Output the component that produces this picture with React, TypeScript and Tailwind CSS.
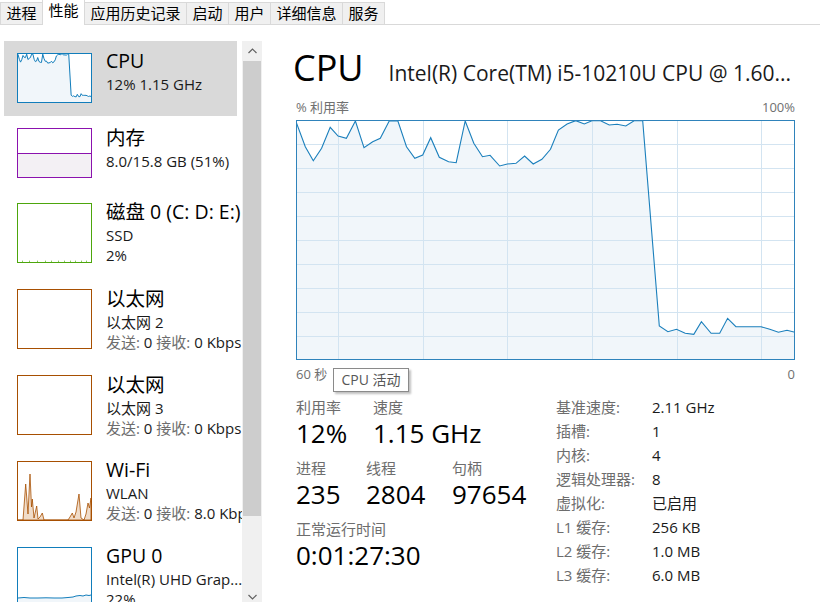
import type { ReactNode } from "react";

const tabs = ["进程", "性能", "应用历史记录", "启动", "用户", "详细信息", "服务"];

// cpu usage samples, chart coords (499 x 240, top = 100%)
const cpu: [number, number][] = [
  [0, 1.7], [9.3, 26.7], [17.3, 40.7], [25.6, 28.3], [34.2, 7.3], [42.1, 16], [50.4, 18.3],
  [59.4, 1], [68, 27.7], [76.7, 21.7], [84.3, 18.3], [93.2, 1], [101.9, 1], [110.5, 26.7],
  [118.8, 38.3], [126.7, 35], [134.7, 17.7], [143.3, 37.3], [152.6, 41.7], [160.2, 42.7],
  [169.2, 1], [177.8, 23.3], [186.5, 36.7], [194.1, 35.3], [203.7, 46], [211.3, 44], [220, 43.3],
  [228.6, 36], [237.2, 44], [245.9, 39.3], [254.5, 29.3], [262.4, 10], [271.1, 4], [279.7, 0.7],
  [288.3, 4], [295.9, 0.7], [304.6, 0.7], [313.2, 5], [321.1, 4.3], [329.8, 6], [338.1, 0.7],
  [346.7, 0.7], [363.3, 206], [371.9, 211.7], [380.5, 209.3], [389.2, 213.3], [397.8, 214.3],
  [405.4, 201.7], [415.1, 213.3], [423.7, 213.3], [431.6, 198.3], [439.9, 206.7], [448.6, 206.7],
  [457.2, 206.7], [465.1, 206.7], [473.8, 209.3], [482.4, 212.3], [491, 210.3], [499, 212.3],
];

const line = cpu.map(([x, y]) => `${x},${y}`).join(" ");
const area = `0,240 ${line} 499,240`;

function CpuThumb() {
  return (
    <svg className="h-full w-full" viewBox="0 0 499 240" preserveAspectRatio="none">
      <polygon points={area} fill="#f1f6fa" />
      <polyline points={line} fill="none" stroke="#117dbb" strokeWidth="1" vectorEffect="non-scaling-stroke" />
    </svg>
  );
}

function MemThumb() {
  return (
    <div className="flex h-full flex-col">
      <div className="h-[24px] bg-white" />
      <div className="flex-1 border-t border-[#8b12ae] bg-[#f3f0f4]" />
    </div>
  );
}

function DiskThumb() {
  const specks = [4, 11, 19, 27, 33, 40, 46, 52, 57, 63, 68];
  return (
    <svg className="h-full w-full" viewBox="0 0 73 58" preserveAspectRatio="none">
      {specks.map((x) => (
        <rect key={x} x={x} y="56.6" width="1" height="1.4" fill="#8cc866" />
      ))}
    </svg>
  );
}

function WifiThumb() {
  const pts =
    "0,58 5,58 7.7,22 10,52 12,12 13.5,45 14.3,37 16,56 18.7,44 20,57 22,55 24.3,51 26,58 50,58 52,55 54.3,51 56,56 58,50 61,32 63,56 66,58 68,52 70,41 71.5,46 73,36 73,58";
  return (
    <svg className="h-full w-full" viewBox="0 0 73 58" preserveAspectRatio="none">
      <polygon points={pts} fill="#f0dcc9" stroke="#a74f01" strokeWidth="0.8" />
    </svg>
  );
}

function GpuThumb() {
  const pts = "0,50 6,49.5 12,50 20,50 28,49.8 36,50 44,50 50,49.5 55,49 58,48 62,47.5 65,48 68,47 71,47.5 73,47";
  return (
    <svg className="h-full w-full" viewBox="0 0 73 58" preserveAspectRatio="none">
      <polygon points={`0,58 ${pts} 73,58`} fill="#f1f6fa" />
      <polyline points={pts} fill="none" stroke="#117dbb" strokeWidth="1" />
    </svg>
  );
}

type Item = {
  title: string;
  lines: ReactNode[];
  row: string;
  box: string;
  text: string;
  border: string;
  thumb: ReactNode;
  selected?: boolean;
};

const traffic = (recv: string) => (
  <>
    <span className="text-[#6d6d6d]">发送:</span> 0 <span className="text-[#6d6d6d]">接收:</span> {recv}
  </>
);

const items: Item[] = [
  { title: "CPU", lines: ["12% 1.15 GHz"], row: "h-[75px]", box: "h-[50px]", text: "mt-[7px]", border: "border-[#117dbb]", thumb: <CpuThumb />, selected: true },
  { title: "内存", lines: ["8.0/15.8 GB (51%)"], row: "h-[75px]", box: "h-[50px]", text: "mt-[9px]", border: "border-[#8b12ae]", thumb: <MemThumb /> },
  { title: "磁盘 0 (C: D: E:)", lines: ["SSD", "2%"], row: "h-[86px]", box: "h-[60px]", text: "mt-[8px]", border: "border-[#4da60c]", thumb: <DiskThumb /> },
  { title: "以太网", lines: ["以太网 2", traffic("0 Kbps")], row: "h-[86px]", box: "h-[60px]", text: "mt-[9px]", border: "border-[#a74f01]", thumb: null },
  { title: "以太网", lines: ["以太网 3", traffic("0 Kbps")], row: "h-[86px]", box: "h-[60px]", text: "mt-[9px]", border: "border-[#a74f01]", thumb: null },
  { title: "Wi-Fi", lines: ["WLAN", traffic("8.0 Kbps")], row: "h-[86px]", box: "h-[60px]", text: "mt-[8px]", border: "border-[#a74f01]", thumb: <WifiThumb /> },
  { title: "GPU 0", lines: ["Intel(R) UHD Grap...", "22%"], row: "h-[86px]", box: "h-[60px]", text: "mt-[8px]", border: "border-[#117dbb]", thumb: <GpuThumb /> },
];

const specs = [
  ["基准速度:", "2.11 GHz"],
  ["插槽:", "1"],
  ["内核:", "4"],
  ["逻辑处理器:", "8"],
  ["虚拟化:", "已启用"],
  ["L1 缓存:", "256 KB"],
  ["L2 缓存:", "1.0 MB"],
  ["L3 缓存:", "6.0 MB"],
];

function Stat({ label, value, w }: { label: string; value: string; w: string }) {
  return (
    <div className={w}>
      <div className="h-[20px] text-[15px] leading-[20px] text-[#6d6d6d]">{label}</div>
      <div className="h-[33px] text-[26px] leading-[33px] text-black">{value}</div>
    </div>
  );
}

const hLines = [24, 48, 72, 96, 120, 144, 168, 192, 216];
const vLines = [42, 127, 211, 296, 381, 465];

export default function App() {
  return (
    <div className="relative h-[602px] w-[820px] overflow-hidden bg-white font-['Open_Sans','Noto_Sans_CJK_SC',sans-serif] text-black">
      <div className="flex h-[25px] items-end border-b border-[#d9d9d9]">
        {tabs.map((t, i) =>
          i === 1 ? (
            <div
              key={t}
              className="relative z-10 -mb-px -ml-px flex h-[26px] items-center border-x border-t border-[#d9d9d9] bg-white px-[5.5px] pb-[4px] text-[15px] leading-none"
            >
              {t}
            </div>
          ) : (
            <div
              key={t}
              className="-ml-px flex h-[22px] items-center border-x border-t border-[#d9d9d9] bg-[#f0f0f0] px-[5.5px] text-[15px] leading-none first:ml-0"
            >
              {t}
            </div>
          ),
        )}
      </div>

      <div className="flex">
        <div className="flex w-[262px] shrink-0">
          <div className="w-[242px] overflow-hidden pt-[16px]">
            {items.map((it, i) => (
              <div
                key={i}
                className={`ml-[4px] flex w-[233px] items-start pl-[13px] ${it.row} ${it.selected ? "bg-[#d9d9d9]" : ""}`}
              >
                <div className={`mt-[12px] w-[75px] shrink-0 border bg-white ${it.box} ${it.border}`}>{it.thumb}</div>
                <div className={`ml-[14px] whitespace-nowrap ${it.text}`}>
                  <div className="text-[19.5px] leading-[26px]">{it.title}</div>
                  {it.lines.map((l, j) => (
                    <div key={j} className="text-[15px] leading-[20px] text-[#1a1a1a]">
                      {l}
                    </div>
                  ))}
                </div>
              </div>
            ))}
          </div>
          <div className="mt-[16px] flex h-[566px] w-[20px] flex-col items-center bg-[#f0f0f0]">
            <div className="flex h-[20px] items-center justify-center">
              <svg width="9" height="6" viewBox="0 0 9 6">
                <polyline points="0.5,5 4.5,1 8.5,5" fill="none" stroke="#606060" strokeWidth="1.2" />
              </svg>
            </div>
            <div className="h-[455px] w-[18px] bg-[#cdcdcd]" />
            <div className="flex-1" />
            <div className="flex h-[20px] items-center justify-center">
              <svg width="9" height="6" viewBox="0 0 9 6">
                <polyline points="0.5,1 4.5,5 8.5,1" fill="none" stroke="#606060" strokeWidth="1.2" />
              </svg>
            </div>
          </div>
        </div>

        <div className="ml-[34px] flex w-[499px] flex-col">
          <div className="mt-[21px] flex h-[44px] items-baseline whitespace-nowrap">
            <span className="-ml-[3px] text-[36px] leading-[44px]">CPU</span>
            <span className="ml-[25px] text-[21px] text-[#1a1a1a]">Intel(R) Core(TM) i5-10210U CPU @ 1.60...</span>
          </div>

          <div className="mt-[9px] flex h-[16px] justify-between text-[13px] leading-[16px] text-[#707070]">
            <span>% 利用率</span>
            <span>100%</span>
          </div>

          <svg className="mt-[5px] block" width="499" height="240" viewBox="0 0 499 240">
            <polygon points={area} fill="#f1f6fa" />
            {hLines.map((y) => (
              <line key={y} x1="0" x2="499" y1={y + 0.5} y2={y + 0.5} stroke="#d3e4f1" strokeWidth="1" />
            ))}
            {vLines.map((x) => (
              <line key={x} x1={x + 0.5} x2={x + 0.5} y1="0" y2="240" stroke="#d3e4f1" strokeWidth="1" />
            ))}
            <polyline points={line} fill="none" stroke="#1a7fbc" strokeWidth="1.1" />
            <rect x="0.5" y="0.5" width="498" height="239" fill="none" stroke="#2f83bb" strokeWidth="1" />
          </svg>

          <div className="relative mt-[6px] flex h-[16px] justify-between text-[13px] leading-[16px] text-[#707070]">
            <span>60 秒</span>
            <span>0</span>
            <div className="absolute left-[37px] top-[2px] flex h-[24px] w-[76px] items-center justify-center border border-[#8a8a8a] bg-white text-[14px] text-[#575757] shadow-[2px_2px_2px_rgba(0,0,0,0.25)]">
              CPU 活动
            </div>
          </div>

          <div className="mt-[15px] flex">
            <div className="w-[260px] shrink-0">
              <div className="flex">
                <Stat label="利用率" value="12%" w="w-[77px]" />
                <Stat label="速度" value="1.15 GHz" w="" />
              </div>
              <div className="mt-[8px] flex">
                <Stat label="进程" value="235" w="w-[70px]" />
                <Stat label="线程" value="2804" w="w-[86px]" />
                <Stat label="句柄" value="97654" w="" />
              </div>
              <div className="mt-[8px]">
                <Stat label="正常运行时间" value="0:01:27:30" w="" />
              </div>
            </div>
            <div className="-mt-[2px]">
              {specs.map(([k, v]) => (
                <div key={k} className="flex h-[24px] text-[15px] leading-[24px]">
                  <span className="w-[96px] text-[#6d6d6d]">{k}</span>
                  <span className="text-[#1a1a1a]">{v}</span>
                </div>
              ))}
            </div>
          </div>
        </div>
      </div>
    </div>
  );
}
